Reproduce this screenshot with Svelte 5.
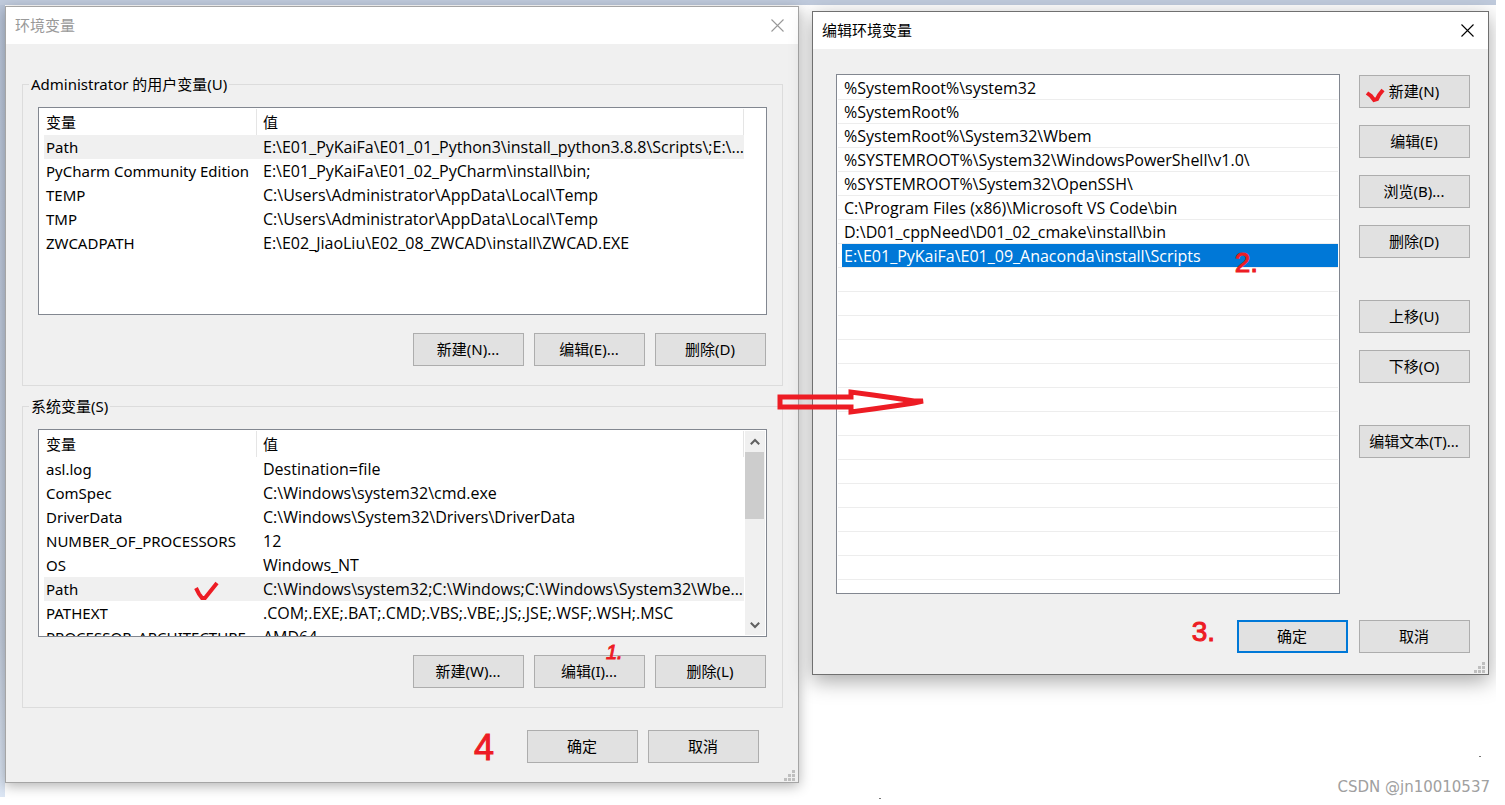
<script lang="ts">
   type Variable = { name: string; value: string };

   const userVars: Variable[] = [
      { name: "Path", value: "E:\\E01_PyKaiFa\\E01_01_Python3\\install_python3.8.8\\Scripts\\;E:\\..." },
      { name: "PyCharm Community Edition", value: "E:\\E01_PyKaiFa\\E01_02_PyCharm\\install\\bin;" },
      { name: "TEMP", value: "C:\\Users\\Administrator\\AppData\\Local\\Temp" },
      { name: "TMP", value: "C:\\Users\\Administrator\\AppData\\Local\\Temp" },
      { name: "ZWCADPATH", value: "E:\\E02_JiaoLiu\\E02_08_ZWCAD\\install\\ZWCAD.EXE" },
   ];

   const systemVars: Variable[] = [
      { name: "asl.log", value: "Destination=file" },
      { name: "ComSpec", value: "C:\\Windows\\system32\\cmd.exe" },
      { name: "DriverData", value: "C:\\Windows\\System32\\Drivers\\DriverData" },
      { name: "NUMBER_OF_PROCESSORS", value: "12" },
      { name: "OS", value: "Windows_NT" },
      { name: "Path", value: "C:\\Windows\\system32;C:\\Windows;C:\\Windows\\System32\\Wbe..." },
      { name: "PATHEXT", value: ".COM;.EXE;.BAT;.CMD;.VBS;.VBE;.JS;.JSE;.WSF;.WSH;.MSC" },
      { name: "PROCESSOR_ARCHITECTURE", value: "AMD64" },
   ];

   const paths = [
      "%SystemRoot%\\system32",
      "%SystemRoot%",
      "%SystemRoot%\\System32\\Wbem",
      "%SYSTEMROOT%\\System32\\WindowsPowerShell\\v1.0\\",
      "%SYSTEMROOT%\\System32\\OpenSSH\\",
      "C:\\Program Files (x86)\\Microsoft VS Code\\bin",
      "D:\\D01_cppNeed\\D01_02_cmake\\install\\bin",
      "E:\\E01_PyKaiFa\\E01_09_Anaconda\\install\\Scripts",
   ];
   // the list keeps its ruled lines below the last entry
   const rows = Array.from({ length: 21 }, (_, i) => paths[i] ?? "");

   let userSelected = $state(0);
   let systemSelected = $state(5);
   let pathSelected = $state(7);
</script>

{#snippet closeIcon()}
   <svg width="13" height="13" viewBox="0 0 13 13" aria-hidden="true">
      <path d="M.5 .5l12 12M12.5 .5l-12 12" fill="none" stroke="currentColor" stroke-width="1.1" />
   </svg>
{/snippet}

{#snippet grip()}
   <svg class="grip" width="11" height="11" viewBox="0 0 11 11" aria-hidden="true">
      <path d="M8 0h3v3H8zM4 4h3v3H4zM8 4h3v3H8zM0 8h3v3H0zM4 8h3v3H4zM8 8h3v3H8z" fill="#bfbfbf" />
   </svg>
{/snippet}

{#snippet varTable(items: Variable[], selected: number, pick: (i: number) => void, ticked: boolean)}
   <table>
      <thead>
         <tr><th class="name">变量</th><th>值</th></tr>
      </thead>
      <tbody>
         {#each items as item, i}
            <tr class:selected={i === selected} onclick={() => pick(i)}>
               <td>
                  {item.name}
                  {#if ticked && i === selected}
                     <svg class="tick row-tick" width="26" height="22" viewBox="0 0 26 22" aria-hidden="true">
                        <path d="M2 8l3 6 3 4 3 0L23 3" />
                     </svg>
                  {/if}
               </td>
               <td class="value">{item.value}</td>
            </tr>
         {/each}
      </tbody>
   </table>
{/snippet}

<main class="desktop">
   <section class="window inactive" role="dialog" aria-label="环境变量">
      <header class="bar">
         <h2>环境变量</h2>
         <button class="close" type="button" aria-label="关闭">{@render closeIcon()}</button>
      </header>

      <div class="vars">
         <fieldset>
            <legend>Administrator 的用户变量(U)</legend>
            <div class="list">
               {@render varTable(userVars, userSelected, (i) => (userSelected = i), false)}
            </div>
            <div class="actions">
               <button type="button">新建(N)...</button>
               <button type="button">编辑(E)...</button>
               <button type="button">删除(D)</button>
            </div>
         </fieldset>

         <fieldset>
            <legend>系统变量(S)</legend>
            <div class="list">
               {@render varTable(systemVars, systemSelected, (i) => (systemSelected = i), true)}
               <div class="scrollbar">
                  <button class="arrow" type="button" aria-label="向上滚动">
                     <svg width="10" height="8" viewBox="0 0 10 8"><path d="M.8 6.2L5 2l4.2 4.2" /></svg>
                  </button>
                  <div class="thumb"></div>
                  <button class="arrow" type="button" aria-label="向下滚动">
                     <svg width="10" height="8" viewBox="0 0 10 8"><path d="M.8 1.8L5 6l4.2-4.2" /></svg>
                  </button>
               </div>
            </div>
            <div class="actions">
               <button type="button">新建(W)...</button>
               <button type="button">编辑(I)...<span class="note one">1.</span></button>
               <button type="button">删除(L)</button>
            </div>
         </fieldset>
      </div>

      <footer class="vars-footer">
         <button type="button"><span class="note four">4</span>确定</button>
         <button type="button">取消</button>
      </footer>
      {@render grip()}
   </section>

   <section class="window editor" role="dialog" aria-label="编辑环境变量">
      <header class="bar">
         <h2>编辑环境变量</h2>
         <button class="close" type="button" aria-label="关闭">{@render closeIcon()}</button>
      </header>

      <div class="edit">
         <ul class="paths">
            {#each rows as path, i}
               <li class:selected={i === pathSelected}>
                  <button class="path" type="button" onclick={() => (pathSelected = i)}>{path}</button>
                  {#if i === pathSelected}<span class="note two">2.</span>{/if}
               </li>
            {/each}
         </ul>
         <div class="side">
            <button type="button">
               新建(N)
               <svg class="tick new-tick" width="22" height="18" viewBox="0 0 22 18" aria-hidden="true">
                  <path d="M2 7l4 3 3 4 3-1 2-4 4-5" />
               </svg>
            </button>
            <button type="button">编辑(E)</button>
            <button type="button">浏览(B)...</button>
            <button type="button">删除(D)</button>
            <button class="apart" type="button">上移(U)</button>
            <button type="button">下移(O)</button>
            <button class="apart" type="button">编辑文本(T)...</button>
         </div>
      </div>

      <footer class="edit-footer">
         <button class="default" type="button"><span class="note three">3.</span>确定</button>
         <button type="button">取消</button>
      </footer>
      {@render grip()}

      <svg class="pointer" width="154" height="28" viewBox="0 0 154 28" aria-hidden="true">
         <path d="M4 9H75V4L97 7 118 10 138 13H147L138 15 118 18 97 21 75 24V19H4Z" />
      </svg>
   </section>

   <i class="speck low"></i>
   <i class="speck high"></i>
   <p class="watermark">CSDN @jn10010537</p>
</main>

<style>
   :global(body) {
      margin: 0;
      background: #fff;
   }

   .desktop {
      position: relative;
      box-sizing: border-box;
      min-height: 100vh;
      margin-right: 9px;
      padding: 6px 7px 22px 5px;
      overflow: hidden;
      display: grid;
      grid-template-columns: 794fr 677fr;
      gap: 13px;
      align-items: start;
      background:
         linear-gradient(#c0cbdd, #c0cbdd) top / 100% 5px no-repeat,
         linear-gradient(#b9c5d9, #c3cddd 80%, #dce6f4) left top / 5px 797px no-repeat,
         #fff;
      font-family: "Noto Sans", "Noto Sans CJK SC", sans-serif;
      font-size: 15px;
      line-height: 24px;
      color: #000;
   }

   .window {
      position: relative;
      min-width: 0;
      border: 1px solid #707070;
      background: #f0f0f0;
      box-shadow: 0 6px 20px rgba(0, 0, 0, 0.35);
   }
   .inactive {
      border-color: #a5a5a5;
      box-shadow: 0 3px 12px rgba(0, 0, 0, 0.3);
   }
   .editor {
      margin-top: 5px;
   }

   .bar {
      box-sizing: border-box;
      display: flex;
      justify-content: space-between;
      align-items: center;
      height: 37px;
      padding: 0 14px 1px 9px;
      background: #fff;
   }
   h2 {
      margin: 0;
      font-size: 15px;
      font-weight: 400;
   }
   .inactive .bar {
      color: #999;
   }

   button {
      position: relative;
      box-sizing: border-box;
      width: 111px;
      height: 33px;
      padding: 0 1px 2px 0;
      border: 1px solid #adadad;
      background: #e1e1e1;
      font: inherit;
      color: #000;
      white-space: nowrap;
   }
   button:hover {
      border-color: #0078d7;
   }
   .default {
      border: 2px solid #0078d7;
   }
   .close {
      display: flex;
      width: auto;
      height: auto;
      padding: 0;
      border: none;
      background: none;
      color: inherit;
   }

   .vars {
      display: grid;
      gap: 8px;
      padding: 28px 15px 0 16px;
   }
   fieldset {
      min-width: 0;
      margin: 0;
      padding: 11px 15px 19px;
      border: 1px solid #dcdcdc;
   }
   legend {
      margin-left: -9px;
      padding: 0 2px;
   }
   .list {
      box-sizing: border-box;
      position: relative;
      height: 208px;
      padding: 1px 22px 1px 5px;
      border: 1px solid #828790;
      background: #fff;
      overflow: hidden;
   }
   table {
      width: 100%;
      table-layout: fixed;
      border-collapse: separate;
      border-spacing: 0;
   }
   th,
   td {
      height: 24px;
      padding: 0 0 0 6px;
      overflow: hidden;
      text-align: left;
      font-weight: 400;
      white-space: nowrap;
   }
   .value,
   .path {
      font-family: "Open Sans", "Noto Sans CJK SC", sans-serif;
      font-size: 16px;
   }
   th {
      height: 26px;
      border-right: 1px solid #e5e5e5;
   }
   .name {
      width: 210px;
   }
   th:first-child,
   td:first-child {
      position: relative;
      padding-left: 2px;
   }
   tr.selected {
      background: #f0f0f0;
   }

   .scrollbar {
      position: absolute;
      top: 1px;
      right: 1px;
      bottom: 1px;
      width: 20px;
      display: flex;
      flex-direction: column;
      background: #f0f0f0;
   }
   .thumb {
      height: 67px;
      margin: 0 1px 0 0;
      background: #cdcdcd;
   }
   .arrow {
      display: flex;
      align-items: center;
      justify-content: center;
      width: 19px;
      height: 21px;
      padding: 0;
      border: none;
      background: none;
   }
   .arrow:last-child {
      margin-top: auto;
   }
   .arrow path {
      fill: none;
      stroke: #606060;
      stroke-width: 2;
   }

   .actions {
      display: flex;
      justify-content: flex-end;
      gap: 10px;
      margin-top: 18px;
      padding-right: 1px;
   }
   .vars-footer {
      display: flex;
      justify-content: flex-end;
      gap: 10px;
      padding: 22px 39px 19px;
   }

   .edit {
      display: flex;
      gap: 19px;
      padding: 25px 18px 0 23px;
   }
   .paths {
      box-sizing: border-box;
      flex: 1;
      min-width: 0;
      height: 520px;
      margin: 0;
      padding: 1px;
      border: 1px solid #828790;
      background: #fff;
      list-style: none;
   }
   .paths li {
      position: relative;
      height: 23px;
      padding-left: 4px;
      border-bottom: 1px solid #ededed;
   }
   .path {
      display: block;
      width: 100%;
      height: 23px;
      padding: 0 0 0 2px;
      border: none;
      background: none;
      text-align: left;
   }
   .selected .path {
      background: #0078d7;
      color: #fff;
   }
   .side {
      display: flex;
      flex-direction: column;
      gap: 17px;
      padding-top: 1px;
   }
   .side .apart {
      margin-top: 25px;
   }
   .edit-footer {
      display: flex;
      justify-content: flex-end;
      gap: 11px;
      padding: 26px 18px 21px;
   }

   .grip {
      position: absolute;
      right: 3px;
      bottom: 1px;
   }

   /* red pen marks over the dialogs */
   .note {
      position: absolute;
      font-family: "Liberation Sans", sans-serif;
      font-size: 28px;
      line-height: 28px;
      color: #ed1c24;
      pointer-events: none;
      -webkit-text-stroke: 1px #ed1c24;
   }
   .one {
      top: -12px;
      left: 71px;
      font-size: 20px;
      line-height: 16px;
      font-style: italic;
   }
   .two {
      top: 5px;
      right: 80px;
   }
   .three {
      top: -4px;
      right: 131px;
   }
   .four {
      top: 3px;
      right: 143px;
      font-size: 36px;
   }
   .tick,
   .pointer {
      position: absolute;
      fill: none;
      stroke: #ed1c24;
      pointer-events: none;
   }
   .tick {
      stroke-width: 4;
   }
   .row-tick {
      top: 3px;
      left: 150px;
   }
   .new-tick {
      top: 10px;
      left: 5px;
   }
   .pointer {
      top: 376px;
      left: -37px;
      stroke-width: 5;
   }

   .speck {
      position: absolute;
      width: 2px;
      height: 1px;
      background: #777;
   }
   .low {
      left: 879px;
      top: 798px;
   }
   .high {
      right: 15px;
      top: 756px;
   }
   .watermark {
      position: absolute;
      right: 6px;
      bottom: 6px;
      margin: 0;
      font-family: "DejaVu Sans", sans-serif;
      font-size: 15px;
      color: #a0a0a0;
   }
</style>
